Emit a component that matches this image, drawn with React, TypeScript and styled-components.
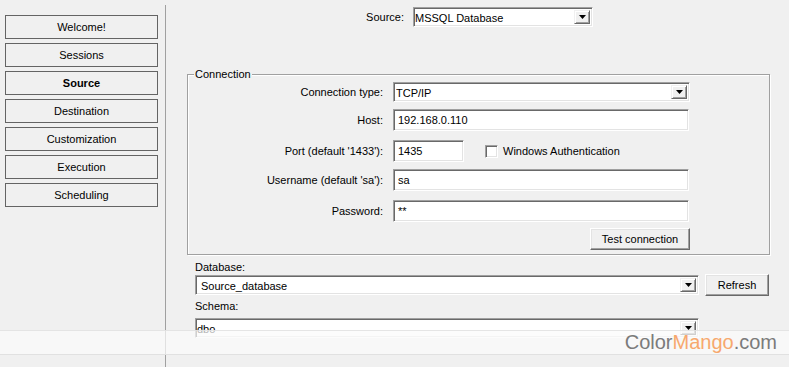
import React from 'react';
import styled, { createGlobalStyle } from 'styled-components';

const GlobalStyle = createGlobalStyle`
  html, body {
    margin: 0;
    padding: 0;
    background: #f0f0f0;
  }
  body {
    width: 789px;
    height: 367px;
    overflow: hidden;
    font-family: "Liberation Sans", Arial, sans-serif;
    font-size: 11px;
    color: #000;
  }
`;

const Window = styled.div`
  position: relative;
  display: flex;
  width: 789px;
  height: 367px;
  background: #f0f0f0;
`;

const Sidebar = styled.nav`
  width: 165px;
  box-sizing: border-box;
  padding: 15px 0 0 5px;
  display: flex;
  flex-direction: column;
  gap: 4px;
`;

const NavButton = styled.div<{ $active?: boolean }>`
  width: 153px;
  height: 24px;
  box-sizing: border-box;
  border: 1px solid #646464;
  display: flex;
  align-items: center;
  justify-content: center;
  font-weight: ${(p) => (p.$active ? 700 : 400)};
`;

const Divider = styled.div`
  width: 1px;
  margin-top: 5px;
  background: #a0a0a0;
`;

const Main = styled.main`
  flex: 1;
  display: flex;
  flex-direction: column;
  padding: 7px 19px 0 21px;
`;

const SourceRow = styled.div`
  display: grid;
  grid-template-columns: 217px 180px;
  column-gap: 9px;
  align-items: center;
`;

const RightLabel = styled.label<{ $h?: number }>`
  text-align: right;
  line-height: ${(p) => p.$h ?? 20}px;
  white-space: nowrap;
`;

const sunken = `
  box-sizing: border-box;
  background: #fff;
  border: 1px solid;
  border-color: #a0a0a0 #fff #fff #a0a0a0;
  box-shadow: inset 1px 1px 0 #696969, inset -1px -1px 0 #e3e3e3;
`;

const ComboBox = styled.div<{ $w: number; $pad?: number }>`
  ${sunken}
  width: ${(p) => p.$w}px;
  height: 20px;
  display: flex;
  align-items: stretch;
  padding: 2px 2px 2px ${(p) => p.$pad ?? 2}px;
`;

const ComboText = styled.span`
  flex: 1;
  line-height: 16px;
  white-space: nowrap;
  overflow: hidden;
`;

const ArrowButton = styled.span`
  width: 16px;
  box-sizing: border-box;
  background: #f0f0f0;
  border: 1px solid;
  border-color: #f0f0f0 #696969 #696969 #f0f0f0;
  box-shadow: inset 1px 1px 0 #fff, inset -1px -1px 0 #a0a0a0;
  display: flex;
  align-items: center;
  justify-content: center;
`;

const TextInput = styled.div<{ $w: number }>`
  ${sunken}
  width: ${(p) => p.$w}px;
  height: 22px;
  padding: 0 4px;
  line-height: 21px;
  white-space: nowrap;
`;

const GroupBox = styled.section`
  margin-top: 47px;
  border: 1px solid #a0a0a0;
  box-shadow: inset 1px 1px 0 #fff, 1px 1px 0 #fff;
  padding-bottom: 4px;
`;

const GroupTitle = styled.div`
  width: fit-content;
  margin: -7px 0 0 6px;
  padding: 0 1px;
  line-height: 13px;
  background: #f0f0f0;
`;

const FormGrid = styled.div`
  margin-top: 1px;
  display: grid;
  grid-template-columns: 195px 297px;
  grid-template-rows: 27px 31px 29px 31px 28px 22px;
  column-gap: 10px;
  align-items: start;
`;

const InlineRow = styled.div`
  display: flex;
  align-items: center;
  height: 22px;
`;

const CheckBox = styled.span`
  width: 13px;
  height: 13px;
  box-sizing: border-box;
  margin-left: 21px;
  background: #fff;
  border: 1px solid;
  border-color: #a0a0a0 #fff #fff #a0a0a0;
  box-shadow: inset 1px 1px 0 #696969, inset -1px -1px 0 #e3e3e3;
`;

const CheckLabel = styled.span`
  margin-left: 5px;
`;

const PushButton = styled.div<{ $w: number; $offset?: number }>`
  width: ${(p) => p.$w}px;
  height: 22px;
  box-sizing: border-box;
  margin-left: ${(p) => p.$offset ?? 0}px;
  background: #f0f0f0;
  border: 1px solid;
  border-color: #fff #696969 #696969 #fff;
  box-shadow: inset -1px -1px 0 #a0a0a0, inset 1px 1px 0 #e3e3e3;
  display: flex;
  align-items: center;
  justify-content: center;
  white-space: nowrap;
`;

const Lower = styled.div`
  padding-left: 8px;
  display: flex;
  flex-direction: column;
`;

const FieldCaption = styled.div<{ $top: number }>`
  margin-top: ${(p) => p.$top}px;
  line-height: 13px;
`;

const DbRow = styled.div`
  display: flex;
  align-items: center;
  gap: 6px;
  height: 22px;
`;

const SchemaRow = styled.div`
  margin-top: 5px;
`;

const Watermark = styled.div`
  position: absolute;
  left: 0;
  right: 0;
  top: 330px;
  height: 25px;
  box-sizing: border-box;
  background: rgba(251, 251, 251, 0.7);
  border-top: 1px solid rgba(222, 222, 222, 0.8);
  border-bottom: 1px solid #e1e1e1;
  display: flex;
  justify-content: flex-end;
  align-items: center;
  padding-right: 12px;
  font-family: "Liberation Sans", Arial, sans-serif;
  font-size: 20px;
  line-height: 23px;
  color: #7b7b7b;
`;

const Mango = styled.span`
  color: #f7a86e;
`;

const Arrow = () => (
  <svg width="7" height="4" viewBox="0 0 7 4">
    <path d="M0 0h7L3.5 4z" fill="#000" />
  </svg>
);

const Combo: React.FC<{ w: number; pad?: number; value: string }> = ({ w, pad, value }) => (
  <ComboBox $w={w} $pad={pad}>
    <ComboText>{value}</ComboText>
    <ArrowButton>
      <Arrow />
    </ArrowButton>
  </ComboBox>
);

const steps = ['Welcome!', 'Sessions', 'Source', 'Destination', 'Customization', 'Execution', 'Scheduling'];

export default function App() {
  return (
    <>
      <GlobalStyle />
      <Window>
        <Sidebar>
          {steps.map((s) => (
            <NavButton key={s} $active={s === 'Source'}>
              {s}
            </NavButton>
          ))}
        </Sidebar>
        <Divider />
        <Main>
          <SourceRow>
            <RightLabel>Source:</RightLabel>
            <Combo w={180} pad={1} value="MSSQL Database" />
          </SourceRow>

          <GroupBox>
            <GroupTitle>Connection</GroupTitle>
            <FormGrid>
              <RightLabel $h={20}>Connection type:</RightLabel>
              <Combo w={297} value="TCP/IP" />

              <RightLabel $h={22}>Host:</RightLabel>
              <TextInput $w={296}>192.168.0.110</TextInput>

              <RightLabel $h={22}>Port (default '1433'):</RightLabel>
              <InlineRow>
                <TextInput $w={71}>1435</TextInput>
                <CheckBox />
                <CheckLabel>Windows Authentication</CheckLabel>
              </InlineRow>

              <RightLabel $h={22}>Username (default 'sa'):</RightLabel>
              <TextInput $w={296}>sa</TextInput>

              <RightLabel $h={22}>Password:</RightLabel>
              <TextInput $w={296}>**</TextInput>

              <span />
              <PushButton $w={100} $offset={197}>Test connection</PushButton>
            </FormGrid>
          </GroupBox>

          <Lower>
            <FieldCaption $top={6}>Database:</FieldCaption>
            <DbRow>
              <Combo w={504} pad={5} value="Source_database" />
              <PushButton $w={64}>Refresh</PushButton>
            </DbRow>
            <FieldCaption $top={4}>Schema:</FieldCaption>
            <SchemaRow>
              <Combo w={504} pad={1} value="dbo" />
            </SchemaRow>
          </Lower>
        </Main>
        <Watermark>
          Color<Mango>Mango</Mango>.com
        </Watermark>
      </Window>
    </>
  );
}
